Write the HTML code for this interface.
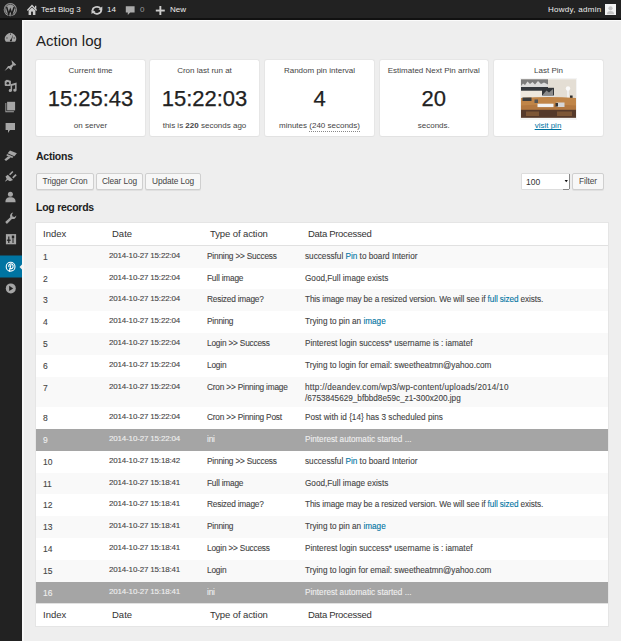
<!DOCTYPE html>
<html><head><meta charset="utf-8">
<style>
*{box-sizing:border-box;}
html,body{margin:0;padding:0;width:621px;height:641px;overflow:hidden;background:#eeeeee;font-family:"Liberation Sans",sans-serif;color:#444;}
#bar{position:absolute;left:0;top:0;width:621px;height:20px;background:#222;border-bottom:2px solid #111;}
#barline{position:absolute;left:22px;top:20px;width:599px;height:1px;background:#fbfbfb;}
#side{position:absolute;left:0;top:20px;width:22px;height:622px;background:#222;}
#sideline{position:absolute;left:22px;top:20px;width:2px;height:622px;background:#f7f7f7;}
.t{position:absolute;white-space:nowrap;}
.bar-t{color:#eee;font-size:8px;top:5px;}
h1{position:absolute;left:36px;top:32px;margin:0;font-weight:normal;font-size:15px;color:#222;}
.box{position:absolute;top:59px;height:78px;width:111px;background:#fff;border:1px solid #e6e6e6;border-bottom-color:#e2e2e2;border-radius:3px;text-align:center;}
.box .l1{position:absolute;left:0;right:0;top:6px;font-size:8px;color:#444;}
.box .big{position:absolute;left:0;right:0;top:26px;font-size:22px;color:#222;-webkit-text-stroke:0.25px #222;}
.box .l3{position:absolute;left:0;right:0;top:61px;font-size:8px;color:#444;}
h2{position:absolute;margin:0;font-size:10.5px;letter-spacing:-0.25px;font-weight:bold;color:#222;}
.btn{position:absolute;top:172.5px;height:17px;background:#f7f7f7;border:1px solid #cfcfcf;border-radius:2px;box-shadow:0 1px 0 rgba(0,0,0,.06);font-size:8.3px;letter-spacing:-0.1px;color:#444;text-align:center;line-height:15px;}
#tbl{position:absolute;left:35px;top:222px;width:574px;height:405px;background:#fff;border:1px solid #e5e5e5;}
.row{position:absolute;left:0;width:570px;}
.row.alt{background:#f9f9f9;}
.row.ini{background:#a5a5a5;color:#eee;}
.c{position:absolute;font-size:8px;white-space:nowrap;color:#444;-webkit-text-stroke:0.1px currentColor;}
.ini .c{color:#f0f0f0;}
.row{left:36px;width:572px;}
.hrow{position:absolute;left:36px;width:572px;height:23px;border-bottom:1px solid #e1e1e1;}
.h{position:absolute;top:5px;font-size:9.5px;color:#333;white-space:nowrap;}
.hi{left:7px}.hd{left:76px}.ht{left:174px;letter-spacing:-0.1px}.hp{left:272px;letter-spacing:-0.3px}
.c{top:4.5px;}
.ci{left:7px;top:5.5px;font-size:8.5px}.cd{left:73px;letter-spacing:-0.17px}.ct{left:171px;font-size:8.3px;letter-spacing:-0.2px}.cp{left:269px;line-height:11.5px;font-size:8.2px}
a{color:#0074a2;text-decoration:none;text-decoration-skip-ink:none;}
</style></head><body>
<div id="bar"></div>
<div id="side"></div>
<svg style="position:absolute;left:0;top:0" width="23" height="300" viewBox="0 0 23 300">
<g fill="#a5a5a5">
<!-- dashboard gauge -->
<path d="M5.9 41.8 A5.6 5.6 0 1 1 15.1 41.8 Z"/>
<path d="M10.5 40.5 L13.2 34.6 L11.6 40.8 Z" fill="#222"/>
<circle cx="10.9" cy="40.4" r="1.0" fill="#222"/>
<rect x="10.1" y="33.5" width="0.8" height="1.3" fill="#222"/>
<rect x="6.3" y="37.6" width="1.3" height="0.8" fill="#222"/>
<rect x="13.6" y="37.6" width="1.3" height="0.8" fill="#222"/>
<!-- pin -->
<path d="M11.5 60 L16.2 64.7 L14.9 65.8 L13.8 65.3 L11.6 68.0 L11.8 69.6 L10.8 70.0 L7.7 66.9 L8.2 65.9 L9.8 66.1 L12.4 63.9 L11.9 62.8 Z"/>
<path d="M9.3 67.6 L4.5 71 L8.0 66.3 Z"/>
<!-- media -->
<rect x="4.7" y="80.6" width="6.2" height="5.4" rx="1"/>
<rect x="6.0" y="79.9" width="2.6" height="1.4"/>
<circle cx="7.8" cy="83.3" r="1.3" fill="#222"/>
<path d="M10.6 84.2 L16.6 82.6 L16.6 90.2 A1.7 1.5 0 1 1 15.1 88.7 L15.1 85.0 L12.1 85.8 L12.1 90.6 A1.7 1.5 0 1 1 10.6 89.1 Z"/>
<!-- pages -->
<path d="M7.1 101.8 H15.1 V110.4 H7.1 Z"/>
<path d="M5.4 103.0 V112.2 H13.9 V111.3 H6.3 V103.0 Z"/>
<!-- comments -->
<path d="M5.6 123 H15 V130 H10 L8 133 V130 H5.6 Z"/>
<!-- appearance brush -->
<path d="M10.0 150.4 L16.9 153.3 L14.4 156.2 L7.6 153.3 Z"/>
<path d="M7.0 154.0 L13.6 156.8 L12.2 158.0 L6.4 155.6 Z"/>
<path d="M8.2 156.3 L10.8 157.6 L6.0 161.0 L4.4 159.6 Z"/>
<!-- plugins -->
<path d="M7.8 174.8 L13.0 180.0 L10.0 181.2 L7.6 180.0 L5.4 181.6 L5.0 181.2 L6.7 179.0 L5.5 176.6 Z"/>
<rect x="10.4" y="170.8" width="1.7" height="4.6" transform="rotate(45 11.2 173.1)"/>
<rect x="13.6" y="174.0" width="1.7" height="4.6" transform="rotate(45 14.4 176.3)"/>
<!-- users -->
<circle cx="10.4" cy="194.2" r="2.5"/>
<path d="M5.4 202.2 Q5.4 197.6 9 197.3 L11.8 197.3 Q15.6 197.6 15.6 202.2 Z"/>
<!-- tools wrench -->
<path d="M13.2 212.6 A3.3 3.3 0 0 0 10.3 217.2 L5.2 222.1 L6.9 223.9 L11.9 218.9 A3.3 3.3 0 0 0 16.3 215.6 L14.7 217.0 L12.5 216.6 L12.0 214.4 Z"/>
<!-- settings -->
<rect x="5.9" y="234.1" width="10.2" height="10.2"/>
<rect x="8.2" y="236.5" width="1.2" height="6.5" fill="#222"/>
<rect x="6.9" y="239.6" width="3.8" height="1.2" fill="#222"/>
<rect x="11.8" y="235.6" width="2.4" height="2.6" fill="#222"/>
<rect x="12.5" y="238.2" width="1.0" height="4.8" fill="#222"/>
</g>
<!-- active pinterest -->
<rect x="0" y="255.5" width="22" height="22" fill="#0074a2"/>
<circle cx="10.6" cy="266.7" r="4.4" fill="none" stroke="#fff" stroke-width="1.1"/>
<path d="M9.2 271.8 L10.9 264.9 M9.3 268.6 Q13.5 269.5 13.1 265.5 Q12.2 263.3 10.1 264.0 Q8.2 264.9 9.0 267.0" fill="none" stroke="#fff" stroke-width="1.1"/>
<path d="M22.2 264.2 L19.5 267 L22.2 269.8 Z" fill="#eee"/>
<!-- play -->
<circle cx="10.8" cy="288.4" r="5.0" fill="#a5a5a5"/>
<path d="M9.2 285.7 L13.2 288.4 L9.2 291.1 Z" fill="#222"/>
</svg>
<div id="barline"></div>
<div id="sideline"></div>
<svg style="position:absolute;left:0;top:0" width="180" height="19" viewBox="0 0 180 19">
<circle cx="10.3" cy="9.7" r="6.6" fill="#9a9a9a"/>
<circle cx="10.3" cy="9.7" r="5.4" fill="none" stroke="#333" stroke-width="0.7"/>
<path d="M6.6 7.0 L8.7 13.9 L10.3 9.6 L11.9 13.9 L14.2 7.0" fill="none" stroke="#1e1e1e" stroke-width="1.5"/>
<path d="M27.4 10.4 L32 5.6 L36.6 10.4" fill="none" stroke="#ccc" stroke-width="1.4"/>
<rect x="35" y="5.8" width="1.3" height="3" fill="#ccc"/>
<path d="M28.6 10.6 L32 7.4 L35.4 10.6 V15 H28.6 Z" fill="#ccc"/>
<rect x="31.1" y="11.6" width="1.8" height="3.4" fill="#222"/>
<path d="M92.6 10.6 A4.3 3.5 0 0 1 100.6 8.6" fill="none" stroke="#ccc" stroke-width="1.7"/>
<path d="M101.2 10.0 A4.3 3.5 0 0 1 93.2 12.0" fill="none" stroke="#ccc" stroke-width="1.7"/>
<path d="M102.3 6.6 L102.3 10.6 L98.4 9.4 Z" fill="#ccc"/>
<path d="M91.5 14.0 L91.5 10.0 L95.4 11.2 Z" fill="#ccc"/>
<path d="M125.8 6.3 H134.6 V12.6 H130.2 L127.8 14.9 V12.6 H125.8 Z" fill="#aaa"/>
<rect x="155.8" y="9.6" width="9" height="1.9" fill="#ccc"/>
<rect x="159.4" y="6" width="1.9" height="9" fill="#ccc"/>
</svg>
<svg style="position:absolute;left:604px;top:3px" width="13" height="13" viewBox="0 0 13 13">
<rect x="1" y="1" width="11" height="11" fill="#f2f2f2"/>
<circle cx="6.5" cy="5.3" r="2.1" fill="#c4c4c4"/>
<path d="M2.8 11.2 Q3.2 8 6.5 8 Q9.8 8 10.2 11.2 Z" fill="#c4c4c4"/>
</svg>
<div class="t bar-t" style="left:41px">Test Blog 3</div>
<div class="t bar-t" style="left:107px">14</div>
<div class="t bar-t" style="left:140px;color:#999">0</div>
<div class="t bar-t" style="left:170px">New</div>
<div class="t bar-t" style="left:548px;letter-spacing:0.28px">Howdy, admin</div>

<h1>Action log</h1>

<div class="box" style="left:35px"><div class="l1">Current time</div><div class="big">15:25:43</div><div class="l3">on server</div></div>
<div class="box" style="left:149px"><div class="l1">Cron last run at</div><div class="big">15:22:03</div><div class="l3">this is <b>220</b> seconds ago</div></div>
<div class="box" style="left:264px"><div class="l1">Random pin interval</div><div class="big">4</div><div class="l3">minutes <span style="border-bottom:1px dotted #888;padding-bottom:0.5px">(240 seconds)</span></div></div>
<div class="box" style="left:378.5px;width:110.5px"><div class="l1">Estimated Next Pin arrival</div><div class="big">20</div><div class="l3">seconds.</div></div>
<div class="box" style="left:493px;width:111px"><div class="l1">Last Pin</div></div><svg style="position:absolute;left:520px;top:77.5px" width="57" height="42" viewBox="0 0 57 42">
<rect x="0" y="0" width="57" height="42" fill="#f4f4f4"/>
<rect x="1" y="1.3" width="55" height="38.5" fill="#e4ded4"/>
<rect x="1" y="1.3" width="27" height="11.5" fill="#7c7c7c"/>
<path d="M1 8 L3 5.5 L5 7 L7.5 3.5 L10 6 L12.5 4 L15 6.5 L18 3 L21 6 L24 4.5 L28 6.5 V9.5 H1 Z" fill="#dcdcdc"/>
<rect x="1" y="9" width="27" height="3.8" fill="#34383d"/>
<rect x="1" y="12.8" width="21" height="7" fill="#eee8de"/>
<rect x="22" y="9.8" width="12" height="8" fill="#33363a"/>
<path d="M23 16.5 L26.5 12.5 L29 14.5 L33 11 V17 H23 Z" fill="#8a8a8a"/>
<rect x="21.5" y="17.6" width="13" height="3.6" fill="#e6e6e6"/>
<rect x="47.2" y="10.5" width="1.6" height="9.5" fill="#f4f4f4"/>
<circle cx="48" cy="10.5" r="2.2" fill="#fbfbfb"/>
<rect x="50" y="17.5" width="2.6" height="5" fill="#2e2e2e"/>
<path d="M1 20 Q28.5 17.8 56 20 V32 Q28.5 34.5 1 32 Z" fill="#c08548"/>
<path d="M1 27.5 Q28.5 25.5 56 27.5 V32 Q28.5 34.5 1 32 Z" fill="#b37840"/>
<rect x="1" y="31.8" width="55" height="8" fill="#55392a"/>
<rect x="6" y="33.5" width="13" height="4.5" fill="#7d5636"/>
<rect x="37" y="33.5" width="15" height="4.5" fill="#7d5636"/>
<rect x="2.5" y="19.5" width="9" height="3.5" fill="#3c3c3c"/>
<rect x="17.5" y="25.7" width="16" height="3.4" fill="#f2f2f2"/>
<rect x="14.5" y="21.5" width="3.5" height="3.5" fill="#555"/>
<rect x="36.5" y="24.5" width="8" height="4.5" fill="#d6d6d6"/>
<rect x="35.5" y="25" width="2.5" height="3.5" fill="#333"/>
</svg><div class="t" style="left:493px;width:110px;top:121px;text-align:center;font-size:8px"><a style="text-decoration:underline;text-underline-offset:0.5px;text-decoration-thickness:1px">visit pin</a></div>

<h2 style="left:36px;top:150px">Actions</h2>
<div class="btn" style="left:36px;width:58px">Trigger Cron</div>
<div class="btn" style="left:96px;width:47px">Clear Log</div>
<div class="btn" style="left:145px;width:56px">Update Log</div>
<div style="position:absolute;left:521px;top:173px;width:49px;height:17px;background:#fff;border:1px solid #ddd;border-radius:1px;"></div>
<div style="position:absolute;left:563px;top:188.5px;width:6px;height:1px;background:#888;"></div>
<div style="position:absolute;left:568.5px;top:174px;width:1px;height:15px;background:#888;"></div>
<svg style="position:absolute;left:564px;top:179px" width="5" height="4" viewBox="0 0 5 4"><path d="M0.6 1 H3.9 L2.25 3.3 Z" fill="#111"/></svg>
<div class="t" style="left:526px;top:176.5px;font-size:8.5px;color:#333">100</div>
<div class="btn" style="left:572px;width:32px">Filter</div>

<h2 style="left:36px;top:201px">Log records</h2>

<div id="tbl"></div>
<div class="hrow" style="top:223px"><div class="h hi">Index</div><div class="h hd">Date</div><div class="h ht">Type of action</div><div class="h hp">Data Processed</div></div>
<div class="hrow" style="top:603px;border-bottom:0;border-top:1px solid #e1e1e1"><div class="h hi">Index</div><div class="h hd">Date</div><div class="h ht">Type of action</div><div class="h hp">Data Processed</div></div>
<div class="row alt" style="top:246px;height:22px"><div class="c ci">1</div><div class="c cd">2014-10-27 15:22:04</div><div class="c ct">Pinning &gt;&gt; Success</div><div class="c cp">successful <a>Pin</a> to board Interior</div></div>
<div class="row" style="top:268px;height:21px"><div class="c ci">2</div><div class="c cd">2014-10-27 15:22:04</div><div class="c ct">Full image</div><div class="c cp">Good,Full image exists</div></div>
<div class="row alt" style="top:289px;height:22px"><div class="c ci">3</div><div class="c cd">2014-10-27 15:22:04</div><div class="c ct">Resized image?</div><div class="c cp" style="letter-spacing:-0.1px">This image may be a resized version. We will see if <a>full sized</a> exists.</div></div>
<div class="row" style="top:311px;height:22px"><div class="c ci">4</div><div class="c cd">2014-10-27 15:22:04</div><div class="c ct">Pinning</div><div class="c cp">Trying to pin an <a>image</a></div></div>
<div class="row alt" style="top:333px;height:22px"><div class="c ci">5</div><div class="c cd">2014-10-27 15:22:04</div><div class="c ct">Login &gt;&gt; Success</div><div class="c cp">Pinterest login success* username is : iamatef</div></div>
<div class="row" style="top:355px;height:22px"><div class="c ci">6</div><div class="c cd">2014-10-27 15:22:04</div><div class="c ct">Login</div><div class="c cp">Trying to login for email: sweetheatmn@yahoo.com</div></div>
<div class="row alt" style="top:377px;height:30px"><div class="c ci">7</div><div class="c cd">2014-10-27 15:22:04</div><div class="c ct">Cron &gt;&gt; Pinning image</div><div class="c cp"><span style="letter-spacing:0.25px">http://deandev.com/wp3/wp-content/uploads/2014/10</span><br>/6753845629_bfbbd8e59c_z1-300x200.jpg</div></div>
<div class="row" style="top:407px;height:22px"><div class="c ci">8</div><div class="c cd">2014-10-27 15:22:04</div><div class="c ct">Cron &gt;&gt; Pinning Post</div><div class="c cp">Post with id {14} has 3 scheduled pins</div></div>
<div class="row ini" style="top:429px;height:22px"><div class="c ci">9</div><div class="c cd">2014-10-27 15:22:04</div><div class="c ct">ini</div><div class="c cp">Pinterest automatic started ...</div></div>
<div class="row" style="top:451px;height:22px"><div class="c ci">10</div><div class="c cd">2014-10-27 15:18:42</div><div class="c ct">Pinning &gt;&gt; Success</div><div class="c cp">successful <a>Pin</a> to board Interior</div></div>
<div class="row alt" style="top:473px;height:21px"><div class="c ci">11</div><div class="c cd">2014-10-27 15:18:41</div><div class="c ct">Full image</div><div class="c cp">Good,Full image exists</div></div>
<div class="row" style="top:494px;height:22px"><div class="c ci">12</div><div class="c cd">2014-10-27 15:18:41</div><div class="c ct">Resized image?</div><div class="c cp" style="letter-spacing:-0.1px">This image may be a resized version. We will see if <a>full sized</a> exists.</div></div>
<div class="row alt" style="top:516px;height:22px"><div class="c ci">13</div><div class="c cd">2014-10-27 15:18:41</div><div class="c ct">Pinning</div><div class="c cp">Trying to pin an <a>image</a></div></div>
<div class="row" style="top:538px;height:22px"><div class="c ci">14</div><div class="c cd">2014-10-27 15:18:41</div><div class="c ct">Login &gt;&gt; Success</div><div class="c cp">Pinterest login success* username is : iamatef</div></div>
<div class="row alt" style="top:560px;height:22px"><div class="c ci">15</div><div class="c cd">2014-10-27 15:18:41</div><div class="c ct">Login</div><div class="c cp">Trying to login for email: sweetheatmn@yahoo.com</div></div>
<div class="row ini" style="top:582px;height:21px"><div class="c ci">16</div><div class="c cd">2014-10-27 15:18:41</div><div class="c ct">ini</div><div class="c cp">Pinterest automatic started ...</div></div>

</body></html>
